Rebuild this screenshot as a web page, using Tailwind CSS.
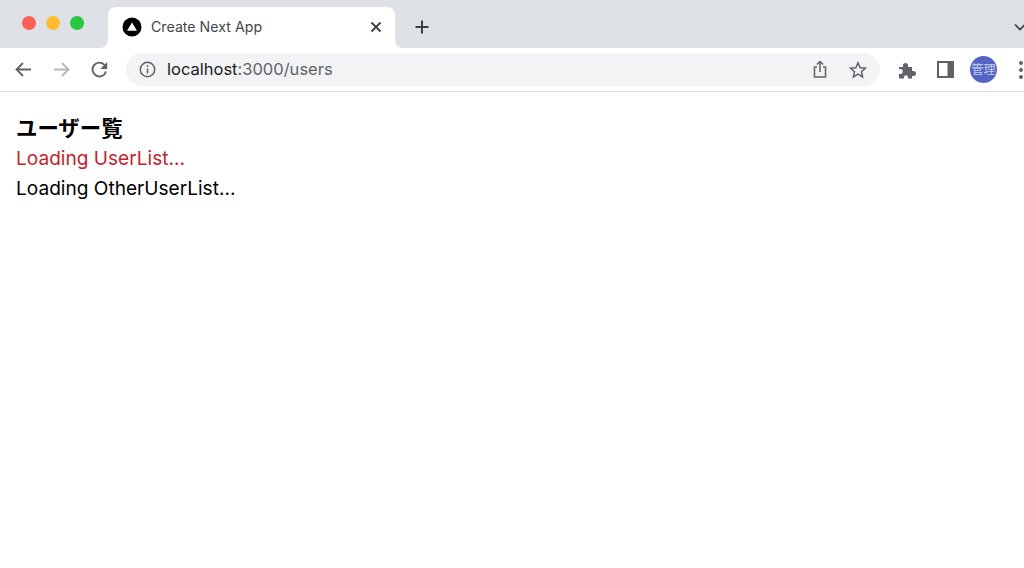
<!DOCTYPE html>
<html lang="ja">
  <head>
    <meta charset="UTF-8">
    <title>Create Next App</title>
    <script src="https://cdn.jsdelivr.net/npm/@tailwindcss/browser@4"></script>
  </head>
  <body class="bg-white overflow-hidden h-[568px] font-['Inter','Noto_Sans_CJK_JP',sans-serif]">
    <!-- Tab bar -->
    <div class="relative h-12 bg-[#dee1e6] flex items-end">
      <div class="w-[108px] h-12 flex items-center gap-[9.6px] pl-[21.6px] pb-[2px] shrink-0">
        <span class="w-[14.4px] h-[14.4px] rounded-full bg-[#fe5f57]"></span>
        <span class="w-[14.4px] h-[14.4px] rounded-full bg-[#febc2e]"></span>
        <span class="w-[14.4px] h-[14.4px] rounded-full bg-[#28c840]"></span>
      </div>
      <div class="relative w-[287px] h-[41px] bg-white rounded-t-lg flex items-center pl-[14px] pr-3 pb-[1px] shrink-0">
        <!-- flared bottom corners of the active tab -->
        <span class="absolute -left-2 bottom-0 w-2 h-2 bg-white"><span class="block w-2 h-2 bg-[#dee1e6] rounded-br-lg"></span></span>
        <span class="absolute -right-2 bottom-0 w-2 h-2 bg-white"><span class="block w-2 h-2 bg-[#dee1e6] rounded-bl-lg"></span></span>
        <svg class="w-5 h-5 shrink-0" viewBox="0 0 20 20">
          <circle cx="10" cy="10" r="9.5" fill="#000"/>
          <path d="M10 5.5 15 13.8H5z" fill="#fff"/>
        </svg>
        <span class="ml-[9px] text-[14.2px] text-[#45474a]">Create Next App</span>
        <svg class="w-3 h-3 ml-auto mr-[1px]" viewBox="0 0 12 12" fill="none" stroke="#3c4043" stroke-width="1.8">
          <path d="M1.5 1.5l9 9M10.5 1.5l-9 9"/>
        </svg>
      </div>
      <svg class="w-4 h-4 ml-[19px] mb-[13px]" viewBox="0 0 16 16" fill="none" stroke="#3c4043" stroke-width="2">
        <path d="M8 1.5v13M1.5 8h13"/>
      </svg>
      <svg class="absolute right-0 top-[23px] w-[10px] h-[8px]" viewBox="0 0 10 8" fill="none" stroke="#3c4043" stroke-width="1.6">
        <path d="M1 1.5l5 5 5-5"/>
      </svg>
    </div>
    <!-- Toolbar -->
    <div class="h-[43px] bg-white border-b border-[#dadce0] flex items-center box-content">
      <div class="flex items-center gap-[19px] pl-[13.5px] w-[126px] shrink-0">
        <svg class="w-[19px] h-[19px] shrink-0" viewBox="0 0 19 19" fill="none" stroke="#5f6368" stroke-width="1.8">
          <path d="M17 9.5H2.5M9 3 2.5 9.5 9 16"/>
        </svg>
        <svg class="w-[19px] h-[19px] shrink-0" viewBox="0 0 19 19" fill="none" stroke="#b4b6b9" stroke-width="1.8">
          <path d="M2 9.5h14.5M10 3l6.5 6.5L10 16"/>
        </svg>
        <svg class="w-[19px] h-[19px] shrink-0" viewBox="0 0 19 19" fill="none" stroke="#5f6368" stroke-width="1.9">
          <path d="M16 11.5a6.9 6.9 0 1 1-1.6-6.7"/>
          <path d="M17.2 2v7h-7z" fill="#5f6368" stroke="none"/>
        </svg>
      </div>
      <div class="w-[754px] h-[33px] rounded-full bg-[#f1f3f4] flex items-center pl-[13px] pr-[13px] shrink-0">
        <svg class="w-[17px] h-[17px] shrink-0" viewBox="0 0 17 17" fill="none" stroke="#5f6368" stroke-width="1.5">
          <circle cx="8.5" cy="8.5" r="7.2"/>
          <path d="M8.5 7.5v5M8.5 4.2v1.8"/>
        </svg>
        <span class="ml-[11px] text-[16.5px] text-[#202124]">localhost<span class="text-[#5f6368]">:3000/users</span></span>
        <svg class="w-[16px] h-[19px] ml-auto" viewBox="0 0 16 19" fill="none" stroke="#5f6368" stroke-width="1.5">
          <path d="M5 7H2.5v10h11V7H11M8 12V1.5M4.8 4.5 8 1.5l3.2 3"/>
        </svg>
        <svg class="w-[18px] h-[18px] ml-[21px]" viewBox="0 0 18 18" fill="none" stroke="#5f6368" stroke-width="1.5">
          <path d="M9 1.8l2.2 4.9 5.2.5-3.9 3.5 1.1 5.2L9 13.2l-4.6 2.7 1.1-5.2-3.9-3.5 5.2-.5z"/>
        </svg>
      </div>
      <svg class="w-[18px] h-[18px] ml-[18px] shrink-0" viewBox="0 0 18 18" fill="#5f6368">
        <path d="M1 6h4V4.5a2.5 2.5 0 0 1 5 0V6h4v4h1.5a2.5 2.5 0 0 1 0 5H14v2.5H10v-1.2a2 2 0 0 0-4 0v1.2H1v-4.5h1.2a2.5 2.5 0 0 0 0-5H1z"/>
      </svg>
      <svg class="w-[17px] h-[17px] ml-[21px] shrink-0" viewBox="0 0 17 17">
        <rect x="0" y="0" width="17" height="17" fill="#5f6368"/>
        <rect x="2" y="2" width="8.5" height="13" fill="#fff"/>
      </svg>
      <span class="w-[27px] h-[27px] ml-[16px] rounded-full bg-[#5565c4] text-white/90 text-[12px] font-light flex items-center justify-center shrink-0">管理</span>
      <div class="ml-[22px] flex flex-col gap-[3px] shrink-0">
        <span class="w-[4px] h-[4px] rounded-full bg-[#5f6368]"></span>
        <span class="w-[4px] h-[4px] rounded-full bg-[#5f6368]"></span>
        <span class="w-[4px] h-[4px] rounded-full bg-[#5f6368]"></span>
      </div>
    </div>
    <!-- Page -->
    <main class="pt-[21px] pl-4 text-[19.1px] leading-[30px] text-black">
      <h1 class="font-bold text-[21.4px]">ユーザー覧</h1>
      <p class="text-[#c3242b]">Loading UserList...</p>
      <p>Loading OtherUserList...</p>
    </main>
  </body>
</html>
